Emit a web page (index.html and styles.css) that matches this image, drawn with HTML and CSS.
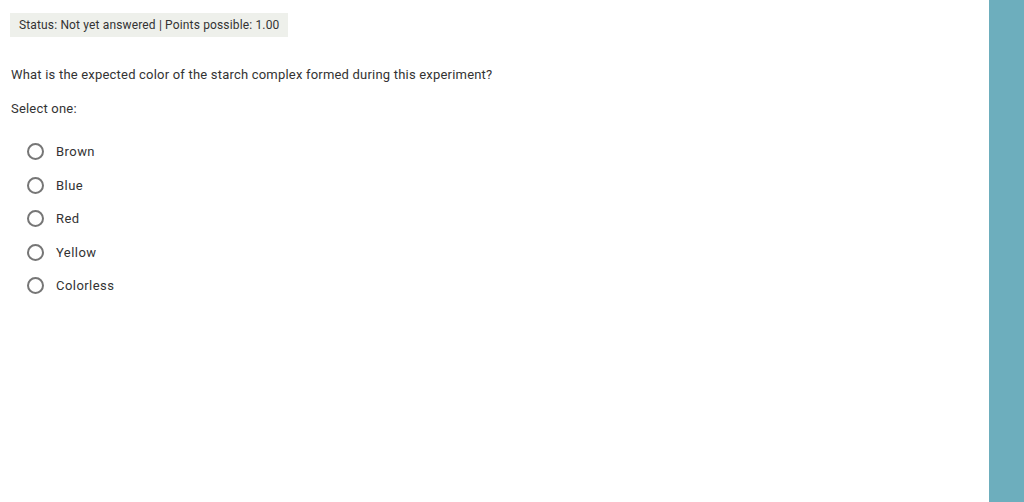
FILE: index.html
```html
<!DOCTYPE html>
<html>
<head>
<meta charset="utf-8">
<link rel="stylesheet" href="styles.css">
</head>
<body>
<div class="layout">
  <main class="content">
    <div class="status">Status: Not yet answered | Points possible: 1.00</div>
    <p class="question">What is the expected color of the starch complex formed during this experiment?</p>
    <p class="prompt">Select one:</p>
    <ul class="options">
      <li class="option"><span class="radio"></span><span class="label">Brown</span></li>
      <li class="option"><span class="radio"></span><span class="label">Blue</span></li>
      <li class="option"><span class="radio"></span><span class="label">Red</span></li>
      <li class="option"><span class="radio"></span><span class="label">Yellow</span></li>
      <li class="option"><span class="radio"></span><span class="label">Colorless</span></li>
    </ul>
  </main>
  <aside class="sidebar"></aside>
</div>
</body>
</html>
```
FILE: styles.css
```css
html, body {
  margin: 0;
  padding: 0;
  height: 100%;
}
body {
  font-family: Roboto, "Liberation Sans", sans-serif;
  color: #333;
  background: #fff;
}
.layout {
  display: flex;
  height: 100%;
}
.content {
  flex: 1;
  padding: 13px 10px 0 10px;
}
.sidebar {
  width: 35px;
  background: #6daebd;
}
.status {
  display: inline-block;
  background: #eef0eb;
  font-size: 12px;
  letter-spacing: 0.15px;
  line-height: 24px;
  padding: 0 9px;
  color: #333;
}
.question {
  margin: 29px 0 0 1px;
  font-size: 13px;
  letter-spacing: 0.2px;
  line-height: 18px;
}
.prompt {
  margin: 16px 0 0 1px;
  font-size: 13px;
  letter-spacing: 0.2px;
  line-height: 18px;
}
.options {
  list-style: none;
  margin: 17px 0 0 0;
  padding: 0 0 0 17px;
}
.option {
  display: flex;
  align-items: center;
  height: 33.5px;
}
.radio {
  box-sizing: border-box;
  width: 17px;
  height: 17px;
  border: 2px solid #767676;
  border-radius: 50%;
  margin-right: 12px;
}
.label {
  font-size: 13px;
  letter-spacing: 0.45px;
  color: #333;
}
```
